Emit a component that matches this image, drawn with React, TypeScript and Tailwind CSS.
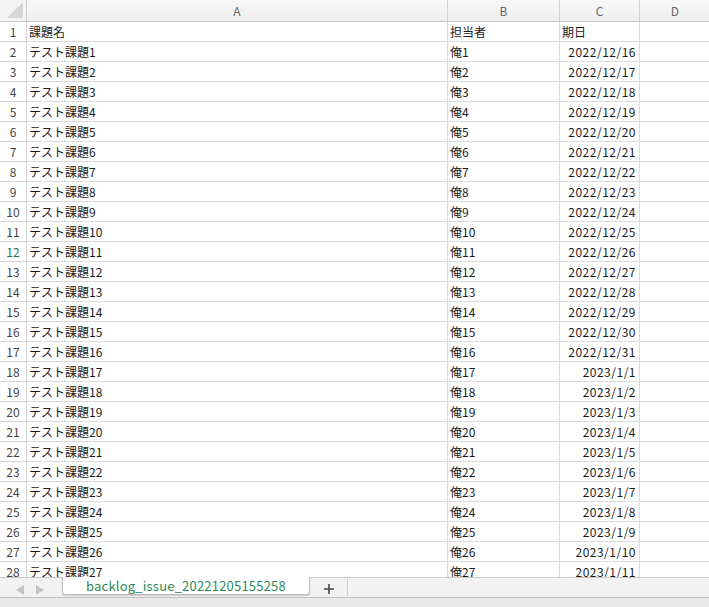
const rows = Array.from({ length: 27 }, (_, i) => {
  const n = i + 1;
  const d = new Date(2022, 11, 16 + i);
  return {
    title: `テスト課題${n}`,
    owner: `俺${n}`,
    due: `${d.getFullYear()}/${d.getMonth() + 1}/${d.getDate()}`,
  };
});

const font = { fontFamily: '"Noto Sans CJK JP", "Noto Sans", sans-serif' };

function HeaderCell({ label, last }: { label: string; last?: boolean }) {
  return (
    <div
      className={`h-[22px] flex items-center justify-center text-[12px] text-[#666] bg-gradient-to-b from-[#f8f8f8] to-[#efefef] border-b border-[#c9c9c9] ${
        last ? "" : "border-r border-r-[#d4d4d4]"
      }`}
    >
      {label}
    </div>
  );
}

function RowNum({ n, active }: { n: number; active?: boolean }) {
  return (
    <div
      className={`h-[20px] flex items-center justify-center text-[12px] border-r border-b border-[#d4d4d4] bg-white ${
        active ? "text-[#217346]" : "text-[#444]"
      }`}
    >
      {n}
    </div>
  );
}

function Cell({
  children,
  right,
  marker,
}: {
  children?: React.ReactNode;
  right?: boolean;
  marker?: boolean;
}) {
  return (
    <div
      className={`relative h-[20px] flex items-center px-[2px] text-[12px] text-[#1a1a1a] border-r border-b border-[#dcdcdc] bg-white whitespace-nowrap overflow-hidden ${
        right ? "justify-end tracking-[0.5px] pr-[3px]" : ""
      }`}
    >
      {marker && <div className="absolute left-[-2px] top-0 bottom-0 w-[2px] bg-[#217346]" />}
      {children}
    </div>
  );
}

export default function App() {
  return (
    <div className="w-[709px] h-[607px] flex flex-col overflow-hidden bg-white" style={font}>
      <div className="flex-1 overflow-hidden">
        <div className="grid grid-cols-[27px_421px_112px_80px_70px]">
          <div className="h-[22px] border-r border-b border-[#c9c9c9] bg-[#f4f4f4] relative">
            <div
              className="absolute right-[3px] bottom-[3px] w-[16px] h-[16px] bg-[#d6d6d6]"
              style={{ clipPath: "polygon(100% 0, 100% 100%, 0 100%)" }}
            />
          </div>
          <HeaderCell label="A" />
          <HeaderCell label="B" />
          <HeaderCell label="C" />
          <HeaderCell label="D" last />

          <RowNum n={1} />
          <Cell>課題名</Cell>
          <Cell>担当者</Cell>
          <Cell>期日</Cell>
          <Cell />

          {rows.map((r, i) => (
            <div key={i} className="contents">
              <RowNum n={i + 2} active={i + 2 === 12} />
              <Cell marker={i + 2 === 12}>{r.title}</Cell>
              <Cell>{r.owner}</Cell>
              <Cell right>{r.due}</Cell>
              <Cell />
            </div>
          ))}
        </div>
      </div>

      <div className="h-[30px] shrink-0 flex flex-col">
        <div className="h-[20px] flex items-start bg-[#f2f2f2] border-t border-[#c8c8c8] relative">
          <div className="w-[62px] h-full flex items-center gap-[12px] pl-[16px] pt-[4px]">
            <svg width="8" height="10" viewBox="0 0 8 10">
              <polygon points="8,0 8,10 0,5" fill="#c4c4c4" />
            </svg>
            <svg width="8" height="10" viewBox="0 0 8 10">
              <polygon points="0,0 0,10 8,5" fill="#c4c4c4" />
            </svg>
          </div>
          <div className="-mt-px w-[248px] h-[18px] bg-white border-x border-b border-[#bdbdbd] rounded-b-[3px] shadow-[0_1px_1px_rgba(0,0,0,0.15)] flex items-center justify-center text-[13px] tracking-[0.2px] text-[#2b8a57] z-10">
            backlog_issue_20221205155258
          </div>
          <div className="w-[37px] h-full flex items-center justify-center pt-[3px]">
            <svg width="12" height="12" viewBox="0 0 12 12">
              <path d="M6 1v10M1 6h10" stroke="#444" strokeWidth="1.6" />
            </svg>
          </div>
          <div className="w-px h-[17px] mt-[1px] bg-[#d0d0d0]" />
        </div>
        <div className="flex-1 bg-[#e9e9e9] border-t border-[#bfbfbf]" />
      </div>
    </div>
  );
}
